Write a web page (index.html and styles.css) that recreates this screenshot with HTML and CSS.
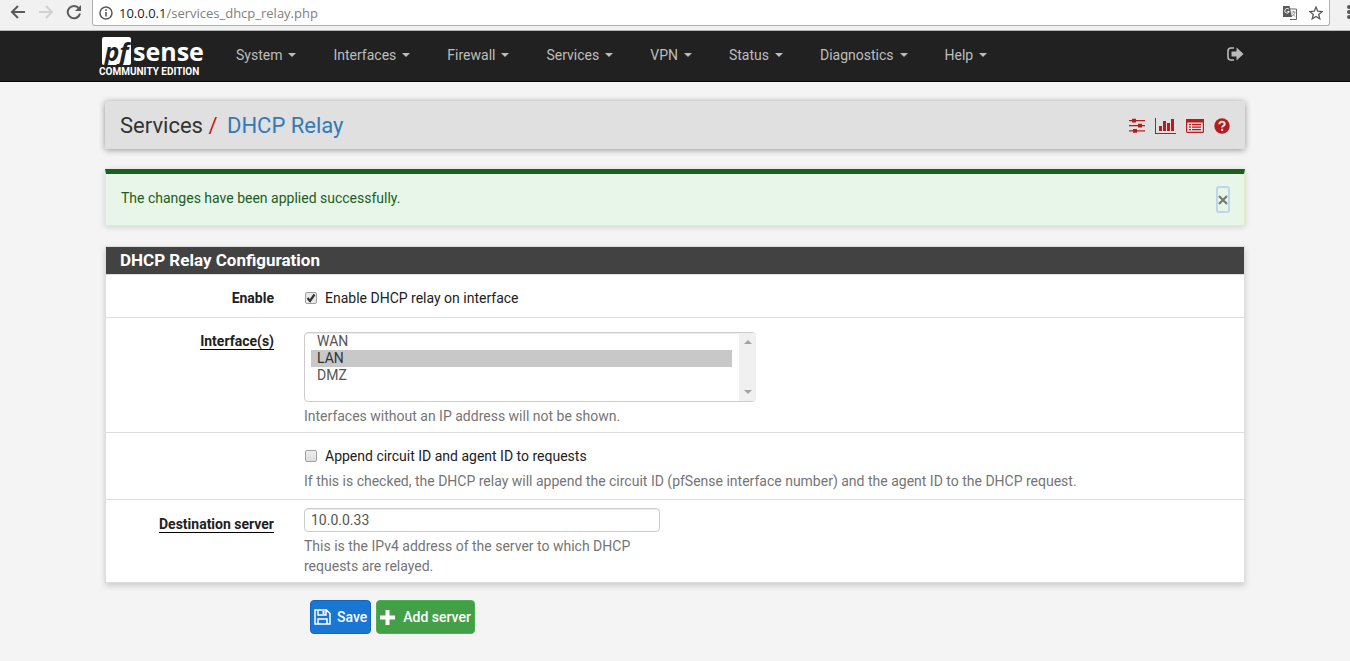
FILE: index.html
```html
<!DOCTYPE html>
<html lang="en">
<head>
	<meta charset="UTF-8">
	<title>Services: DHCP Relay</title>
	<link rel="stylesheet" href="styles.css">
</head>
<body>
	<div class="browser-bar">
		<button class="tool" type="button" aria-label="Back"><svg width="16" height="16" viewBox="0 0 16 16" fill="none" stroke="#5a5a5a" stroke-width="2"><path d="M15 8H2M8 2L2 8l6 6"/></svg></button>
		<button class="tool" type="button" aria-label="Forward" disabled><svg width="16" height="16" viewBox="0 0 16 16" fill="none" stroke="#d2d2d2" stroke-width="2"><path d="M1 8h13M8 2l6 6-6 6"/></svg></button>
		<button class="tool" type="button" aria-label="Reload"><svg width="16" height="16" viewBox="0 0 16 16"><path d="M13 4.5A6.2 6.2 0 1 0 14 9.500" fill="none" stroke="#5a5a5a" stroke-width="2"/><path d="M15 1v6H9z" fill="#5a5a5a"/></svg></button>
		<div class="address">
			<svg width="14" height="14" viewBox="0 0 14 14"><circle cx="7" cy="7" r="6" fill="none" stroke="#5a5a5a" stroke-width="1.500"/><path d="M6.200 6h1.600v4.500H6.200zM6.200 3.300h1.600v1.600H6.200z" fill="#5a5a5a"/></svg>
			<span class="url"><b>10.0.0.1</b>/services_dhcp_relay.php</span>
			<svg width="14" height="14" viewBox="0 0 14 14"><path d="M6 3h7.500v10.500H7" fill="#fff" stroke="#666" /><path d="M0 0h6.500l2.500 11H0z" fill="#5a5a5a"/><path d="M6 3.500A2.300 2.300 0 1 0 6.300 5.500H4.300" fill="none" stroke="#fff"/><path d="M8.500 6h4M10.500 5v1M12 6c-.5 2-1.500 3-3 4M9.500 7.500l2.500 3" fill="none" stroke="#777" stroke-width=".8"/></svg>
			<svg width="14" height="14" viewBox="0 0 14 14"><path d="M7 1l1.700 4.200 4.500.3-3.500 2.900 1.100 4.400L7 10.400l-3.800 2.400 1.100-4.400L.8 5.500l4.500-.3z" fill="none" stroke="#5a5a5a" stroke-width="1.300"/></svg>
		</div>
		<button class="menu" type="button" aria-label="Menu"><svg width="4" height="16" viewBox="0 0 4 16" fill="#5a5a5a"><circle cx="2" cy="3" r="2"/><circle cx="2" cy="8" r="2"/><circle cx="2" cy="13" r="2"/></svg></button>
	</div>

	<header class="navbar">
		<div class="container nav-inner">
			<a class="brand" href="#">
				<span class="logo"><span class="logo-pf">pf</span><span class="logo-sense">sense</span></span>
				<span class="edition">COMMUNITY EDITION</span>
			</a>
			<nav>
				<ul class="nav">
					<li><a href="#">System</a></li>
					<li><a href="#">Interfaces</a></li>
					<li><a href="#">Firewall</a></li>
					<li><a href="#">Services</a></li>
					<li><a href="#">VPN</a></li>
					<li><a href="#">Status</a></li>
					<li><a href="#">Diagnostics</a></li>
					<li><a href="#">Help</a></li>
				</ul>
			</nav>
			<a class="logout" href="#" aria-label="Logout"><svg width="17" height="14" viewBox="0 0 17 14"><path d="M7 1H4Q1 1 1 4v6q0 3 3 3h3" fill="none" stroke="#bbb" stroke-width="1.600"/><path d="M4.500 4.500h5V0.500L16.500 7l-7 6.500v-4h-5z" fill="#bbb"/></svg></a>
		</div>
	</header>

	<main class="container">
		<div class="page-header">
			<h1>Services <span class="slash">/</span> <a href="#">DHCP Relay</a></h1>
			<div class="shortcuts">
				<a href="#" aria-label="Related settings"><svg width="16" height="15" viewBox="0 0 16 15" fill="#b71c1c"><path d="M0 2h16v1.300H0zM0 7h16v1.300H0zM0 12.200h16v1.300H0zM3 .8h4v3.700H3zM9 5.800h4v3.700H9zM4 11h4v3.700H4z"/></svg></a>
				<a href="#" aria-label="Related status"><svg width="21" height="16" viewBox="0 0 21 16" fill="#b71c1c"><path d="M0 0h1v15h20v1H0zM4 8h3v5H4zM8 3h3v10H8zM12 5h3v8h-3zM16 1h3v12h-3z"/></svg></a>
				<a href="#" aria-label="Related log entries"><svg width="18" height="14" viewBox="0 0 18 14"><rect x=".6" y=".6" width="16.800" height="12.800" rx="1" fill="none" stroke="#b71c1c" stroke-width="1.200"/><path d="M0 0h18v3.500H0zM3 5h2v1.200H3zM6 5h9v1.200H6zM3 7.500h2v1.200H3zM6 7.500h9v1.200H6zM3 10h2v1.200H3zM6 10h9v1.200H6z" fill="#b71c1c"/></svg></a>
				<a href="#" aria-label="Help for this page"><svg width="16" height="16" viewBox="0 0 16 16"><circle cx="8" cy="8" r="7.700" fill="#b71c1c"/><path d="M5.300 6.300Q5.300 3.800 8 3.800t2.700 2.300Q10.700 7.400 9 8.100q-.9.400-.9 1.500M8.100 10.800v2.100" fill="none" stroke="#e0e0e0" stroke-width="2.100"/></svg></a>
			</div>
		</div>

		<div class="alert">
			<span>The changes have been applied successfully.</span>
			<button class="close" type="button" aria-label="Close"><svg width="10" height="10" viewBox="0 0 10 10"><path d="M1 1l8 8M9 1L1 9" stroke="#747a75" stroke-width="2.200"/></svg></button>
		</div>

		<form>
			<section class="panel">
				<h2>DHCP Relay Configuration</h2>
				<div class="form-group checks">
					<label class="name" for="enable">Enable</label>
					<div class="field">
						<label class="check"><input type="checkbox" id="enable" checked> Enable DHCP relay on interface</label>
					</div>
				</div>
				<div class="form-group">
					<label class="name" for="interfaces"><span class="required">Interface(s)</span></label>
					<div class="field">
						<div class="list">
							<select id="interfaces" multiple size="4">
								<option>WAN</option>
								<option selected>LAN</option>
								<option>DMZ</option>
							</select>
							<span class="scroller"></span>
						</div>
						<p class="help">Interfaces without an IP address will not be shown.</p>
					</div>
				</div>
				<div class="form-group checks">
					<span class="name"></span>
					<div class="field">
						<label class="check"><input type="checkbox" id="append"> Append circuit ID and agent ID to requests</label>
						<p class="help">If this is checked, the DHCP relay will append the circuit ID (pfSense interface number) and the agent ID to the DHCP request.</p>
					</div>
				</div>
				<div class="form-group tight">
					<label class="name" for="server"><span class="required">Destination server</span></label>
					<div class="field narrow">
						<input class="text" type="text" id="server" value="10.0.0.33">
						<p class="help">This is the IPv4 address of the server to which DHCP requests are relayed.</p>
					</div>
				</div>
			</section>

			<div class="buttons">
				<button class="btn save" type="button"><svg width="17" height="16" viewBox="0 0 17 16" fill="none" stroke="#fff" stroke-width="1.500"><path d="M1 1h11.500L16 4.500V15H1zM4 1v5h8V1M4 15v-5h9v5"/><path d="M9.500 2v3" stroke-width="2"/></svg>Save</button>
				<button class="btn add" type="button"><svg width="15" height="15" viewBox="0 0 15 15" fill="#fff"><path d="M5.500 0h4v5.500H15v4H9.500V15h-4V9.500H0v-4h5.500z"/></svg>Add server</button>
			</div>
		</form>
	</main>
</body>
</html>
```
FILE: styles.css
```css
* {
	box-sizing: border-box;
}
body, h1, h2, p, ul {
	margin: 0;
	padding: 0;
}
body {
	background: #f4f4f4;
	color: #212121;
	font: 14px/20px Roboto, "Liberation Sans", sans-serif;
}
ul {
	list-style: none;
}
a {
	text-decoration: none;
}
svg {
	display: block;
	flex: none;
}
button {
	font: inherit;
	padding: 0;
	border: 0;
	background: none;
}

/* browser toolbar */
.browser-bar {
	display: flex;
	align-items: flex-start;
	height: 31px;
	padding-left: 10px;
	background: #f1f1f1;
	border-bottom: 1px solid #b6b6b6;
	overflow: hidden;
}
.tool {
	margin: 4px 12px 0 0;
}
.tool + .tool + .tool {
	margin-right: 10px;
}
.address {
	display: flex;
	align-items: center;
	flex: 1;
	gap: 12px;
	height: 26px;
	padding: 0 6px;
	background: #fff;
	border: 1px solid #b0b0b0;
	border-top: 0;
	border-radius: 0 0 3px 3px;
}
.url {
	flex: 1;
	margin-left: -6px;
	color: #808080;
	font: 13px "Open Sans", "Noto Sans", sans-serif;
}
.url b {
	color: #222;
	font-weight: normal;
}
.menu {
	margin: 4px 0 0 17px;
	width: 3px;
}

/* navigation */
.container {
	width: 100%;
	max-width: 1140px;
	margin: 0 auto;
}
.navbar {
	background: #212121;
	border-bottom: 1px solid #080808;
}
.nav-inner {
	display: flex;
	align-items: flex-start;
	height: 50px;
}
.brand {
	width: 106px;
	margin-left: -6px;
	padding-top: 6px;
	color: #fff;
}
.logo {
	display: flex;
	height: 28px;
	margin-left: 3px;
	font: bold 25px/28px "Open Sans", sans-serif;
}
.logo-pf {
	width: 29px;
	background: #fff;
	color: #212121;
	font-style: italic;
	text-align: center;
	border-radius: 2px;
}
.logo-sense {
	margin-left: 2px;
}
.edition {
	display: block;
	margin-top: 1px;
	font-size: 10px;
	font-weight: bold;
	line-height: 12px;
	white-space: nowrap;
}
.nav {
	display: flex;
	gap: 37px;
	margin-left: 31px;
	padding-top: 14px;
}
.nav a {
	display: flex;
	align-items: center;
	gap: 6px;
	color: #bdbdbd;
}
.nav a:after {
	content: '';
	border: 4px solid transparent;
	border-top-color: #bdbdbd;
	border-bottom: 0;
}
.logout {
	margin-left: auto;
	margin-right: 1px;
	padding-top: 16px;
}

/* page title */
.page-header {
	display: flex;
	align-items: center;
	justify-content: space-between;
	height: 48px;
	margin-top: 19px;
	padding: 1px 15px 0;
	background: #e0e0e0;
	border-radius: 2px;
	box-shadow: 0 1px 6px rgba(0, 0, 0, .4);
}
h1 {
	color: #333;
	font-size: 22px;
	font-weight: normal;
	line-height: 25px;
}
h1 a {
	margin-left: 4px;
	color: #337ab7;
}
.slash {
	color: #c9151b;
}
.shortcuts {
	display: flex;
	align-items: center;
	gap: 10px;
}

/* message */
.alert {
	display: flex;
	justify-content: space-between;
	height: 57px;
	margin: 20px 0;
	padding: 14px 14px 14px 15px;
	background: #e8f5e9;
	border: 1px solid #dcedc8;
	border-top: 5px solid #1b5e20;
	box-shadow: 0 1px 6px rgba(0, 0, 0, .15);
	color: #1b5e20;
}
.close {
	display: flex;
	align-items: center;
	justify-content: center;
	width: 14px;
	height: 27px;
	margin-top: -2px;
	border: 2px solid #bad7ec;
	border-radius: 3px;
}

/* form */
.panel {
	background: #fff;
	border: 1px solid #ddd;
	box-shadow: 0 3px 6px rgba(0, 0, 0, .16);
}
.panel h2 {
	padding: 0 14px;
	background: #424242;
	color: #fff;
	font-size: 17px;
	font-weight: bold;
	line-height: 27px;
}
.form-group {
	display: grid;
	grid-template-columns: 168px 1fr;
	gap: 30px;
	padding: 14px 0 6px;
	border-top: 1px solid #ddd;
}
.checks {
	padding-bottom: 8px;
}
.name {
	font-weight: bold;
	line-height: 18px;
	text-align: right;
}
.required {
	border-bottom: 1px solid #000;
}
.check {
	display: flex;
	align-items: center;
	gap: 8px;
	padding-bottom: 2px;
	line-height: 18px;
}
.check input {
	appearance: none;
	width: 12px;
	height: 12px;
	margin: 0 0 0 1px;
	background: linear-gradient(#eee, #ddd);
	border: 1px solid #a0a0a0;
	border-radius: 2px;
}
.check input:checked {
	background: url("data:image/svg+xml,%3Csvg xmlns='http://www.w3.org/2000/svg' viewBox='0 0 10 10'%3E%3Cpath d='M1.500 5L4 8 8.500 1.500' fill='none' stroke='%23333' stroke-width='2.200'/%3E%3C/svg%3E") #e8e8e8;
}
.list {
	position: relative;
	display: flex;
	max-width: 452px;
}
select {
	flex: 1;
	height: 70px;
	padding: 0 23px 0 6px;
	border: 1px solid #ccc;
	border-radius: 4px;
	background: #fff;
	color: #555;
	font: inherit;
	box-shadow: inset 0 1px 1px rgba(0, 0, 0, .08);
	scrollbar-width: none;
	outline: 0;
}
option {
	min-height: 17px;
	padding: 0 6px;
	line-height: 17px;
}
option:checked {
	background: #c8c8c8 linear-gradient(#c8c8c8, #c8c8c8);
	color: #333;
}
/* scroll track over the right end of the list */
.scroller {
	position: absolute;
	top: 1px;
	right: 0;
	bottom: 1px;
	display: flex;
	flex-direction: column;
	align-items: center;
	justify-content: space-between;
	width: 17px;
	padding: 7px 0;
	background: #f0f0f0;
	border-radius: 0 3px 3px 0;
}
.scroller:before, .scroller:after {
	content: '';
	border: 4px solid transparent;
}
.scroller:before {
	border-bottom-color: #a3a3a3;
	border-top: 0;
}
.scroller:after {
	border-top-color: #a3a3a3;
	border-bottom: 0;
}
.help {
	margin-top: 4px;
	color: #757575;
}
.tight {
	padding-top: 8px;
}
.tight .name {
	padding-top: 7px;
}
.narrow {
	max-width: 356px;
}
.text {
	display: block;
	width: 100%;
	height: 24px;
	padding: 0 6px;
	border: 1px solid #ccc;
	border-radius: 4px;
	color: #555;
	font: inherit;
	box-shadow: inset 0 1px 1px rgba(0, 0, 0, .08);
}
.buttons {
	display: flex;
	gap: 5px;
	margin: 17px 0 0 205px;
}
.btn {
	display: flex;
	align-items: center;
	gap: 6px;
	height: 34px;
	padding: 0 3px;
	border: 1px solid #1565c0;
	border-radius: 4px;
	background: #1976d2;
	color: #fff;
	font-weight: 500;
}
.add {
	gap: 8px;
	border-color: #4caf50;
	background: #43a047;
}
```
